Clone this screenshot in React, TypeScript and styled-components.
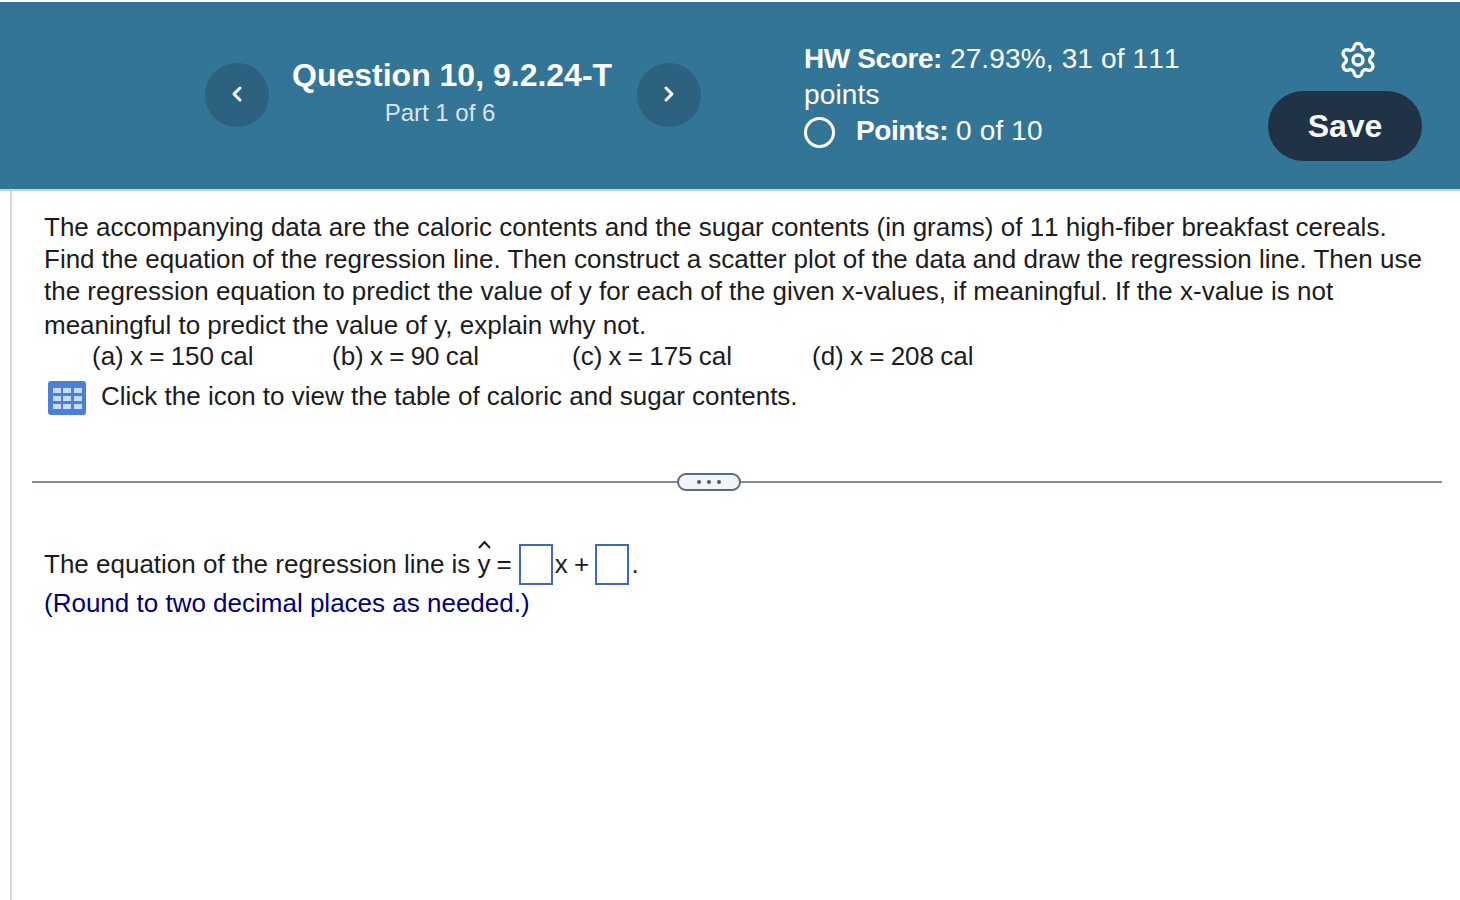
import React from 'react';
import styled, {createGlobalStyle} from 'styled-components';
import {ChevronLeft, ChevronRight} from 'lucide-react';

const GlobalStyle = createGlobalStyle`
    html, body {
        margin: 0;
        padding: 0;
        background: #fff;
        font-family: "Liberation Sans", Arial, sans-serif;
        font-kerning: none;
        color: #1c1c1c;
    }
`;

const Page = styled.div`
    width: 1460px;
    height: 900px;
    overflow: hidden;
    padding-top: 2px;
    box-sizing: border-box;
`;

const Header = styled.header`
    height: 189px;
    box-sizing: border-box;
    display: flex;
    align-items: flex-start;
    padding-left: 205px;
    background: #337596;
    border-bottom: 2px solid #c3d0de;
    color: #fff;
`;

const NavButton = styled.button`
    width: 64px;
    height: 64px;
    margin-top: 61px;
    flex: none;
    padding: 0 0 2px;
    border: none;
    border-radius: 50%;
    background: #2c6180;
    color: #fff;
    display: flex;
    align-items: center;
    justify-content: center;
`;

const TitleBlock = styled.div`
    width: 296px;
    margin: 0 49px 0 23px;
    padding-top: 54px;
    flex: none;
    white-space: nowrap;
`;

const Title = styled.div`
    font-size: 32px;
    font-weight: bold;
    line-height: 38px;
`;

const Part = styled.div`
    font-size: 24px;
    line-height: 38px;
    text-align: center;
    color: #dbe5ee;
`;

const Score = styled.div`
    width: 400px;
    margin-left: 103px;
    padding-top: 39px;
    flex: none;
    font-size: 28px;
    line-height: 36px;
    letter-spacing: 0.15px;

    b {
        letter-spacing: -0.4px;
    }
`;

const PointsRow = styled.div`
    display: flex;
    align-items: center;
    white-space: pre;
`;

const Ring = styled.span`
    width: 31px;
    height: 31px;
    margin-right: 21px;
    box-sizing: border-box;
    border: 3px solid #fff;
    border-radius: 50%;
    position: relative;
    top: 1px;
`;

const Actions = styled.div`
    width: 154px;
    margin-left: 64px;
    padding-top: 38px;
    display: flex;
    flex-direction: column;
    align-items: center;
    flex: none;
`;

const Gear = styled.svg`
    width: 40px;
    height: 40px;
    margin-left: 26px;
    margin-bottom: 11px;
    display: block;
`;

const SaveButton = styled.button`
    width: 154px;
    height: 70px;
    border: none;
    border-radius: 35px;
    background: #203246;
    color: #f7f8fb;
    font-family: inherit;
    font-size: 32px;
    font-weight: bold;
`;

const Body = styled.main`
    height: 709px;
    margin-left: 10px;
    box-sizing: border-box;
    padding: 20px 18px 0 20px;
    border-left: 2px solid #d0d5e2;
`;

const Question = styled.div`
    padding: 0 12px;
    font-size: 26px;
    line-height: 32px;
`;

const Line = styled.div`
    font-kerning: normal;
`;

const FirstLine = styled.div`
    font-kerning: none;
`;

const LastLine = styled(Line)`
    margin-top: 2px;
`;

const Parts = styled.div`
    display: grid;
    grid-template-columns: repeat(4, 240px);
    padding-left: 48px;
    line-height: 30px;
`;

const Eq = styled.span`
    word-spacing: -1px;
`;

const IconRow = styled.div`
    display: flex;
    align-items: center;
    margin-top: 8px;
    height: 34px;
`;

const TableIcon = styled.svg`
    width: 38px;
    height: 34px;
    margin: 4px 15px 0 4px;
    flex: none;
`;

const Divider = styled.div`
    display: flex;
    align-items: center;
    margin-top: 59px;
    height: 20px;
`;

const Rule = styled.div`
    flex: 1;
    height: 2px;
    background: #7f8c9b;
`;

const LeftRule = styled(Rule)`
    flex: none;
    width: 645px;
`;

const Pill = styled.div`
    width: 64px;
    height: 18px;
    flex: none;
    box-sizing: border-box;
    border: 2px solid #5b6b7d;
    border-radius: 9px;
    background: #f3f4f7;
    display: flex;
    align-items: center;
    justify-content: center;
    gap: 6px;
`;

const Dot = styled.span`
    width: 4px;
    height: 4px;
    border-radius: 50%;
    background: #4d5866;
`;

const Answer = styled.div`
    margin-top: 52px;
    padding: 0 12px;
    font-size: 26px;
`;

const EquationLine = styled.div`
    display: flex;
    align-items: center;
    height: 40px;
    white-space: pre;
`;

const Hat = styled.span`
    position: relative;
    margin: 0 6px 0 7px;
`;

const HatMark = styled.svg`
    position: absolute;
    left: 1px;
    top: -9px;
    width: 13px;
    height: 9px;
`;

const AnswerBox = styled.span`
    width: 34px;
    height: 41px;
    box-sizing: border-box;
    border: 2px solid #3f68c4;
    background: #fff;
`;

const Between = styled.span`
    margin-left: 2px;
    word-spacing: -1px;
`;

const Period = styled.span`
    margin-left: 2px;
`;

const Hint = styled.div`
    color: #00007f;
    line-height: 32px;
    margin-top: 3px;
`;

const App = () => (
    <Page>
        <GlobalStyle/>
        <Header>
            <NavButton aria-label="Previous question"><ChevronLeft size={24} strokeWidth={3}/></NavButton>
            <TitleBlock>
                <Title>Question 10, 9.2.24-T</Title>
                <Part>Part 1 of 6</Part>
            </TitleBlock>
            <NavButton aria-label="Next question"><ChevronRight size={24} strokeWidth={3}/></NavButton>
            <Score>
                <div><b>HW Score:</b> 27.93%, 31 of 111 points</div>
                <PointsRow><Ring/><b>Points:</b> 0 of 10</PointsRow>
            </Score>
            <Actions>
                <Gear viewBox="0 0 24 24" fill="none" stroke="#fff" strokeWidth="2" strokeLinecap="round" strokeLinejoin="round">
                    <path d="M9.671 4.136a2.34 2.34 0 0 1 4.659 0 2.34 2.34 0 0 0 3.319 1.915 2.34 2.34 0 0 1 2.33 4.033 2.34 2.34 0 0 0 0 3.831 2.34 2.34 0 0 1-2.33 4.033 2.34 2.34 0 0 0-3.319 1.915 2.34 2.34 0 0 1-4.659 0 2.34 2.34 0 0 0-3.32-1.915 2.34 2.34 0 0 1-2.33-4.033 2.34 2.34 0 0 0 0-3.831A2.34 2.34 0 0 1 6.35 6.051a2.34 2.34 0 0 0 3.319-1.915"/>
                    <circle cx="12" cy="12" r="3"/>
                </Gear>
                <SaveButton>Save</SaveButton>
            </Actions>
        </Header>
        <Body>
            <Question>
                <FirstLine>The accompanying data are the caloric contents and the sugar contents (in grams) of 11 high-fiber breakfast cereals.</FirstLine>
                <Line>Find the equation of the regression line. Then construct a scatter plot of the data and draw the regression line. Then use</Line>
                <Line>the regression equation to predict the value of y for each of the given x-values, if meaningful. If the x-value is not</Line>
                <LastLine>meaningful to predict the value of y, explain why not.</LastLine>
                <Parts>
                    <Eq>(a) x = 150 cal</Eq>
                    <Eq>(b) x = 90 cal</Eq>
                    <Eq>(c) x = 175 cal</Eq>
                    <Eq>(d) x = 208 cal</Eq>
                </Parts>
                <IconRow>
                    <TableIcon viewBox="0 0 38 34">
                        <rect width="38" height="34" rx="3" fill="#4a80d8"/>
                        {[7, 15, 23].map(y => [5, 15, 26].map(x => (
                            <rect key={`${x}-${y}`} x={x} y={y} width="8" height="5" fill="#c9dcf7"/>
                        )))}
                    </TableIcon>
                    Click the icon to view the table of caloric and sugar contents.
                </IconRow>
            </Question>
            <Divider>
                <LeftRule/>
                <Pill><Dot/><Dot/><Dot/></Pill>
                <Rule/>
            </Divider>
            <Answer>
                <EquationLine>
                    The equation of the regression line is
                    <Hat>
                        y
                        <HatMark viewBox="0 0 13 9" fill="none" stroke="#1c1c1c" strokeWidth="2"><path d="M1 8l5.5-6L12 8"/></HatMark>
                    </Hat>
                    = <AnswerBox/><Between>x + </Between><AnswerBox/><Period>.</Period>
                </EquationLine>
                <Hint>(Round to two decimal places as needed.)</Hint>
            </Answer>
        </Body>
    </Page>
);

export default App;
